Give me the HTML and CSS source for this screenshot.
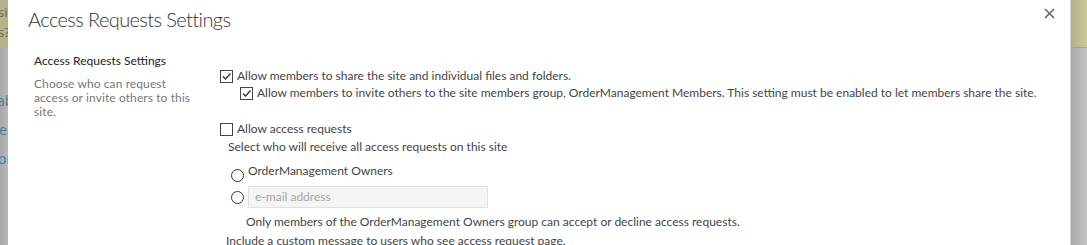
FILE: index.html
```html
<!DOCTYPE html>
<html lang="en">
<head>
<meta charset="utf-8">
<title>Access Requests Settings</title>
<link rel="stylesheet" href="styles.css">
</head>
<body>
<div class="backdrop">
  <div class="edge edge-left">
    <div class="edge-top"><span>sion</span><span>s?</span></div>
    <div class="edge-links"><span class="l1">ab</span><span class="l2">er</span><span class="l3">or</span></div>
  </div>
  <div class="dialog">
    <div class="dialog-head">
      <h1 class="dialog-title">Access Requests Settings</h1>
      <button class="close" aria-label="Close">
        <svg width="11" height="11" viewBox="0 0 11 11"><path d="M1 1L10 10M10 1L1 10" stroke="#666" stroke-width="1.6" fill="none"/></svg>
      </button>
    </div>
    <div class="section">
      <div class="section-info">
        <h2 class="section-title">Access Requests Settings</h2>
        <p class="section-desc">Choose who can request access or invite others to this site.</p>
      </div>
      <div class="section-body">
        <label class="check-row first">
          <span class="box checked"><svg width="11" height="11" viewBox="0 0 11 11"><path d="M2 5.5L4.5 8L9.5 2.5" stroke="#333" stroke-width="1.3" fill="none"/></svg></span>
          <span>Allow members to share the site and individual files and folders.</span>
        </label>
        <label class="check-row sub">
          <span class="box checked"><svg width="11" height="11" viewBox="0 0 11 11"><path d="M2 5.5L4.5 8L9.5 2.5" stroke="#333" stroke-width="1.3" fill="none"/></svg></span>
          <span>Allow members to invite others to the site members group, OrderManagement Members. This setting must be enabled to let members share the site.</span>
        </label>
        <label class="check-row access">
          <span class="box"></span>
          <span>Allow access requests</span>
        </label>
        <div class="select-label">Select who will receive all access requests on this site</div>
        <label class="radio-row owners">
          <span class="radio"></span>
          <span class="radio-text">OrderManagement Owners</span>
        </label>
        <label class="radio-row email">
          <span class="radio"></span>
          <span class="email-input">e-mail address</span>
        </label>
        <div class="note">Only members of the OrderManagement Owners group can accept or decline access requests.</div>
        <div class="custom">Include a custom message to users who see access request page.</div>
      </div>
    </div>
  </div>
  <div class="edge edge-right">
    <div class="edge-top"></div>
    <div class="edge-rest"></div>
  </div>
</div>
</body>
</html>
```
FILE: styles.css
```css
html, body {
  margin: 0;
  padding: 0;
  height: 245px;
  overflow: hidden;
  background: #ffffff;
}
body {
  font-family: "Lato", "Open Sans", sans-serif;
  font-size: 12px;
  color: #444444;
}
.backdrop {
  display: flex;
  height: 245px;
  overflow: hidden;
}
.edge {
  display: flex;
  flex-direction: column;
  overflow: hidden;
  flex: none;
}
.edge-left {
  width: 8px;
  background: linear-gradient(to right, #a8a8a8, #b8b8b8);
}
.edge-left .edge-top {
  height: 48px;
  background: #b8b386;
  display: flex;
  flex-direction: column;
  font-family: "Open Sans", sans-serif;
  font-size: 13px;
  line-height: 20px;
  color: #6a6850;
  padding-top: 2px;
  box-sizing: border-box;
  flex: none;
}
.edge-links {
  display: flex;
  flex-direction: column;
  padding-top: 45px;
  gap: 13px;
  font-family: "Open Sans", sans-serif;
  font-size: 14px;
  line-height: 16px;
  color: #41809a;
}
.edge-top span, .edge-links span {
  display: block;
  white-space: nowrap;
  margin-left: -2px;
}
.edge-links .l1 { margin-left: -3px; }
.edge-links .l2 { margin-left: -1px; }
.edge-links .l3 { margin-left: -2px; }
.edge-right {
  width: 16px;
  border-left: 1px solid #d4d4d4;
}
.edge-right .edge-top {
  height: 47px;
  background: linear-gradient(to right, #b6b184, #cdc89a);
  border-bottom: 1px solid #aaa67c;
  flex: none;
}
.edge-right .edge-rest {
  flex: 1;
  background: linear-gradient(to right, #a9a9a9, #c4c4c4);
}
.dialog {
  flex: 1;
  background: #ffffff;
  padding: 0 0 0 20px;
}
.dialog-head {
  display: flex;
  justify-content: space-between;
  align-items: flex-start;
  height: 51px;
}
.dialog-title {
  margin: 0;
  padding-top: 6px;
  font-family: "Lato", sans-serif;
  font-weight: 300;
  font-size: 20px;
  letter-spacing: -0.6px;
  line-height: 26px;
  color: #333333;
}
.close {
  border: 0;
  background: none;
  padding: 0;
  margin: 8px 15px 0 0;
  width: 11px;
  height: 11px;
  display: block;
}
.close svg { display: block; }
.section {
  display: grid;
  grid-template-columns: 186px 1fr;
  padding-left: 6px;
}
.section-info {
  padding-top: 2px;
}
.section-title {
  margin: 0;
  font-weight: 400;
  font-size: 12px;
  line-height: 16px;
  color: #222222;
}
.section-desc {
  margin: 8px 0 0;
  font-size: 12px;
  line-height: 14px;
  letter-spacing: 0.1px;
  color: #777777;
  width: 168px;
}
.section-body {
  padding-top: 16px;
}
.check-row {
  display: flex;
  align-items: center;
  gap: 4px;
  height: 18px;
  line-height: 18px;
  white-space: nowrap;
}
.check-row.sub {
  padding-left: 20px;
  margin-top: -1px;
}
.check-row.access {
  margin-top: 18px;
}
.box {
  width: 11px;
  height: 11px;
  border: 1px solid #444444;
  background: #ffffff;
  flex: none;
  display: flex;
  align-items: center;
  justify-content: center;
}
.box svg { display: block; }
.select-label {
  padding-left: 8px;
  line-height: 16px;
  margin-top: 1px;
}
.radio-row {
  display: flex;
  align-items: center;
  gap: 4px;
  padding-left: 11px;
}
.radio {
  width: 11px;
  height: 11px;
  border: 1px solid #333333;
  border-radius: 50%;
  flex: none;
  background: #fff;
}
.radio-row.owners {
  margin-top: 12px;
  height: 16px;
}
.radio-text {
  line-height: 16px;
  position: relative;
  top: -4px;
}
.radio-row.email {
  margin-top: 3px;
}
.email-input {
  width: 232px;
  height: 20px;
  border: 1px solid #e1e1e1;
  background: #f4f4f4;
  color: #a6a6a6;
  padding-left: 6px;
  line-height: 20px;
}
.note {
  padding-left: 26px;
  margin-top: 6px;
  line-height: 16px;
}
.custom {
  padding-left: 6px;
  margin-top: 3px;
  line-height: 16px;
}
```
